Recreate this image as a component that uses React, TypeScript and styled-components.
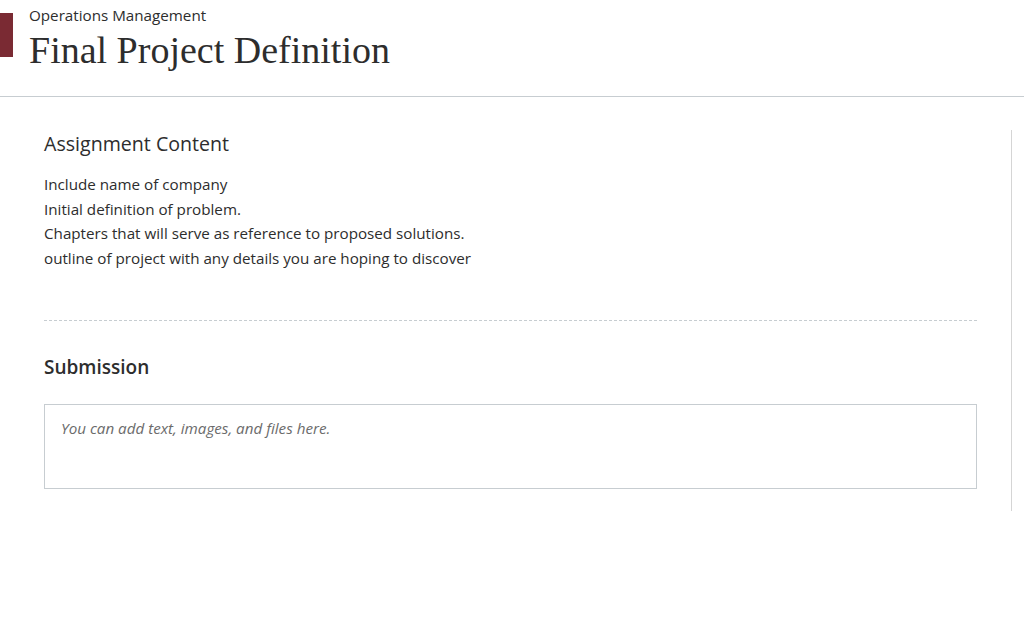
import styled, { createGlobalStyle } from "styled-components";

const GlobalStyle = createGlobalStyle`
  html, body {
    margin: 0;
    padding: 0;
    background: #fff;
  }
  body {
    font-family: "Open Sans", "Noto Sans", sans-serif;
    color: #2d3b45;
  }
`;

const Page = styled.div`
  width: 1024px;
  height: 628px;
  overflow: hidden;
  background: #fff;
`;

const Header = styled.header`
  height: 97px;
  box-sizing: border-box;
  border-bottom: 1px solid #c7cdd1;
  display: flex;
  align-items: flex-start;
  gap: 16px;
`;

const ColorTab = styled.div`
  width: 13px;
  height: 44px;
  margin-top: 13px;
  background: #7a2a33;
`;

const TitleBlock = styled.div`
  padding-top: 5px;
  display: flex;
  flex-direction: column;
`;

const CourseName = styled.div`
  font-size: 15.2px;
  line-height: 20px;
  color: #2d2d2d;
`;

const Title = styled.h1`
  margin: 0;
  font-family: "Liberation Serif", "DejaVu Serif", serif;
  font-weight: 400;
  font-size: 38px;
  line-height: 50px;
  color: #2d2d2d;
`;

const Body = styled.div`
  display: flex;
  padding-top: 33px;
`;

const Main = styled.main`
  width: 933px;
  margin-left: 44px;
`;

const Sidebar = styled.aside`
  margin-left: 34px;
  width: 1px;
  height: 381px;
  background: #d5d5d5;
`;

const SectionTitle = styled.h2<{ $bold?: boolean }>`
  margin: 0;
  font-size: ${(p) => (p.$bold ? "19px" : "19.6px")};
  font-weight: ${(p) => (p.$bold ? 600 : 400)};
  line-height: 28px;
  color: #2d2d2d;
`;

const Content = styled.div`
  margin-top: 14px;
  font-size: 15.2px;
  line-height: 24.5px;
  color: #2d2d2d;
  padding-bottom: 50px;
`;

const Divider = styled.hr`
  margin: 0;
  border: none;
  border-top: 1px dashed #c7cdd1;
`;

const Submission = styled.section`
  padding-top: 32px;
`;

const EditorBox = styled.div`
  margin-top: 23px;
  height: 85px;
  box-sizing: border-box;
  border: 1px solid #c7cdd1;
  padding: 12px 16px;
  font-size: 15.2px;
  font-style: italic;
  color: #6b6b6b;
  line-height: 22px;
`;

export default function App() {
  return (
    <Page>
      <GlobalStyle />
      <Header>
        <ColorTab />
        <TitleBlock>
          <CourseName>Operations Management</CourseName>
          <Title>Final Project Definition</Title>
        </TitleBlock>
      </Header>
      <Body>
        <Main>
          <SectionTitle>Assignment Content</SectionTitle>
          <Content>
            <div>Include name of company</div>
            <div>Initial definition of problem.</div>
            <div>Chapters that will serve as reference to proposed solutions.</div>
            <div>outline of project with any details you are hoping to discover</div>
          </Content>
          <Divider />
          <Submission>
            <SectionTitle $bold>Submission</SectionTitle>
            <EditorBox>You can add text, images, and files here.</EditorBox>
          </Submission>
        </Main>
        <Sidebar />
      </Body>
    </Page>
  );
}
